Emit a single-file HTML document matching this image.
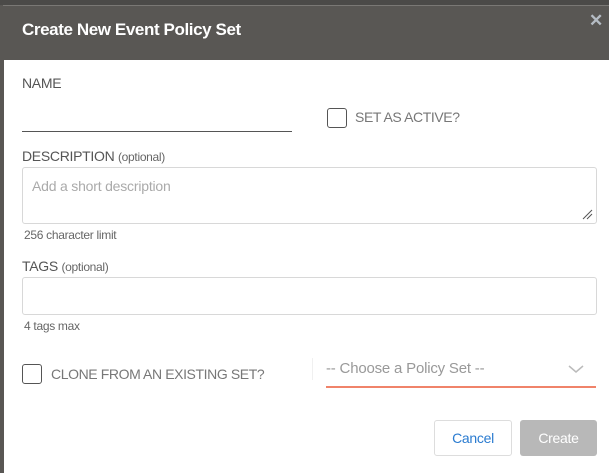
<!DOCTYPE html>
<html><head><style>
*{margin:0;padding:0;box-sizing:border-box}
body{width:609px;height:473px;background:#595754;position:relative;overflow:hidden;font-family:"Liberation Sans",sans-serif}
.abs{position:absolute}
.top{left:0;top:0;width:609px;height:5px;background:#4b4a48}
.line{left:3px;top:5px;width:606px;height:1px;background:#7a7875}
.title{left:22px;top:20px;color:#fff;font-size:17px;font-weight:bold;letter-spacing:-0.4px}
.x{left:589px;top:11px;color:#b5bcc4;font-size:17px;font-weight:bold}
.bodyw{left:4px;top:60px;width:605px;height:413px;background:#fff}
.lbl{color:#555;font-size:14px;letter-spacing:-0.3px}
.opt{font-size:12px;color:#666}
.hint{color:#666;font-size:12px;letter-spacing:-0.3px}
.box{border:1px solid #d8d8d8;border-radius:3px;background:#fff}
.cb{width:20px;height:20px;border:1.5px solid #555;border-radius:3px}
.gray{color:#777;font-size:14px;letter-spacing:-0.4px}
</style></head><body>
<div class="abs top"></div><div class="abs line"></div>
<div class="abs title">Create New Event Policy Set</div>
<div class="abs x">✕</div>
<div class="abs bodyw"></div>
<div class="abs lbl" style="left:22px;top:75px">NAME</div>
<div class="abs" style="left:22px;top:131px;width:270px;height:1px;background:#555"></div>
<div class="abs cb" style="left:327px;top:108px"></div>
<div class="abs gray" style="left:355px;top:109px">SET AS ACTIVE?</div>
<div class="abs lbl" style="left:22px;top:148px">DESCRIPTION <span class="opt">(optional)</span></div>
<div class="abs box" style="left:22px;top:167px;width:575px;height:57px"></div>
<div class="abs" style="left:32px;top:178px;color:#aaa;font-size:14px;letter-spacing:-0.2px">Add a short description</div>
<svg class="abs" style="left:581px;top:208px" width="12" height="12"><path d="M11 2L2 11M11 6L6 11" stroke="#555" stroke-width="1"/></svg>
<div class="abs hint" style="left:24px;top:228px">256 character limit</div>
<div class="abs lbl" style="left:22px;top:258px">TAGS <span class="opt">(optional)</span></div>
<div class="abs box" style="left:22px;top:277px;width:575px;height:38px"></div>
<div class="abs hint" style="left:24px;top:319px">4 tags max</div>
<div class="abs cb" style="left:22px;top:364px"></div>
<div class="abs gray" style="left:51px;top:366px">CLONE FROM AN EXISTING SET?</div>
<div class="abs" style="left:312px;top:358px;width:1px;height:22px;background:#f0f0f0"></div>
<div class="abs" style="left:326px;top:360px;color:#999;font-size:15px;letter-spacing:-0.2px">-- Choose a Policy Set --</div>
<svg class="abs" style="left:568px;top:364px" width="16" height="10"><path d="M1 2L8 8L15 2" stroke="#bbb" fill="none" stroke-width="1.5"/></svg>
<div class="abs" style="left:326px;top:386px;width:270px;height:2px;background:#f0836a"></div>
<div class="abs" style="left:434px;top:420px;width:78px;height:36px;border:1px solid #ddd;border-radius:3px;color:#2a7bd0;font-size:14px;text-align:center;line-height:34px;letter-spacing:-0.3px">Cancel</div>
<div class="abs" style="left:520px;top:420px;width:77px;height:36px;background:#b8b8b8;border-radius:3px;color:#fff;font-size:14px;text-align:center;line-height:36px;letter-spacing:-0.3px">Create</div>
</body></html>
